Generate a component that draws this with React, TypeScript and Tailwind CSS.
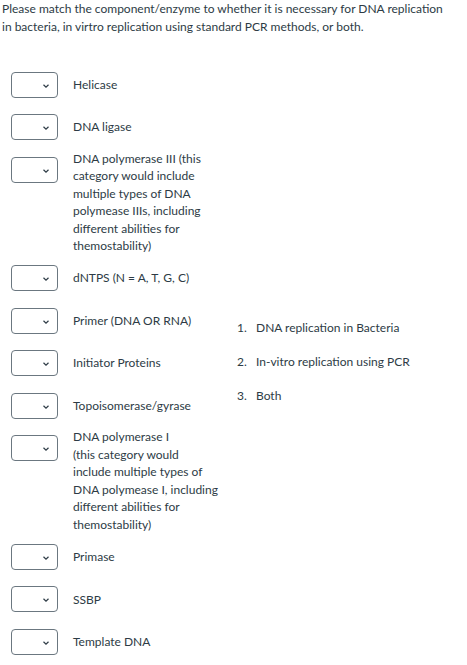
import React from "react";

function Chevron() {
  return (
    <svg width="8" height="6" viewBox="0 0 8 6" className="absolute left-[30px] top-[10px]">
      <path d="M1.5 1.8 L4 4.2 L6.5 1.8" fill="none" stroke="#2d3b45" strokeWidth="1.2" />
    </svg>
  );
}

function SelectBox() {
  return (
    <div className="relative w-[47px] h-[26px] shrink-0 rounded-[4px] border border-[#6b7780] bg-white">
      <Chevron />
    </div>
  );
}

type Item = { lines: string[] };

const items: Item[] = [
  { lines: ["Helicase"] },
  { lines: ["DNA ligase"] },
  {
    lines: [
      "DNA polymerase III (this",
      "category would include",
      "multiple types of DNA",
      "polymease IIIs, including",
      "different abilities for",
      "themostability)",
    ],
  },
  { lines: ["dNTPS (N = A, T, G, C)"] },
  { lines: ["Primer (DNA OR RNA)"] },
  { lines: ["Initiator Proteins"] },
  { lines: ["Topoisomerase/gyrase"] },
  {
    lines: [
      "DNA polymerase I",
      "(this category would",
      "include multiple types of",
      "DNA polymease I, including",
      "different abilities for",
      "themostability)",
    ],
  },
  { lines: ["Primase"] },
  { lines: ["SSBP"] },
  { lines: ["Template DNA"] },
];

export default function App() {
  return (
    <div
      className="bg-white text-[#2d3b45] w-[467px] min-h-[665px]"
      style={{ fontFamily: "Lato, 'Noto Sans', sans-serif" }}
    >
      <p className="pl-[2px] pt-0 text-[12px] leading-[17.5px] m-0">
        Please match the component/enzyme to whether it is necessary for DNA replication
        <br />
        in bacteria, in virtro replication using standard PCR methods, or both.
      </p>
      <div className="flex items-center mt-[36.5px]">
        <div className="flex flex-col pl-[11px] w-[226px]">
          {items.map((it, i) =>
            it.lines.length > 1 ? (
              <div key={i} className="flex items-start gap-[15px] h-[98px] mb-[10.7px]">
                <SelectBox />
                <div className="-mt-[7px] text-[12px] leading-[17.5px] whitespace-nowrap">
                  {it.lines.map((l, j) => (
                    <div key={j}>{l}</div>
                  ))}
                </div>
              </div>
            ) : (
              <div key={i} className="flex items-center gap-[15px] h-[26px] mb-[16.5px] last:mb-0">
                <SelectBox />
                <div className="text-[12px] leading-[17.5px] whitespace-nowrap">{it.lines[0]}</div>
              </div>
            )
          )}
        </div>
        <ol className="flex flex-col gap-[16.5px] text-[12px] leading-[17.5px] pl-[11px] mb-[3px]">
          <li className="flex">
            <span className="w-[19px]">1.</span>
            <span>DNA replication in Bacteria</span>
          </li>
          <li className="flex">
            <span className="w-[19px]">2.</span>
            <span>In-vitro replication using PCR</span>
          </li>
          <li className="flex">
            <span className="w-[19px]">3.</span>
            <span>Both</span>
          </li>
        </ol>
      </div>
    </div>
  );
}
